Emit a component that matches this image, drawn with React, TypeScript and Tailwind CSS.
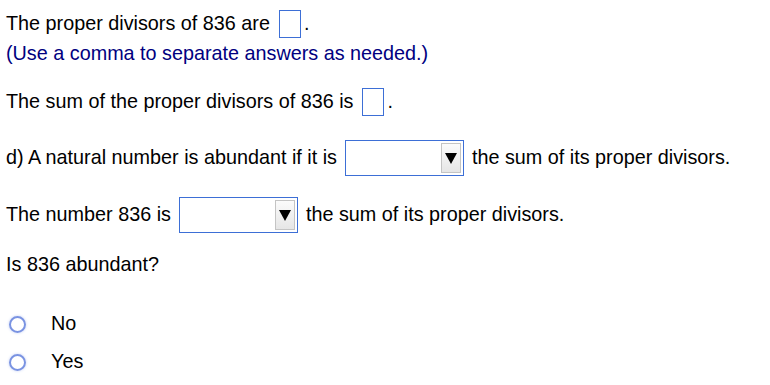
import React from 'react';

const font = { fontFamily: '"Liberation Sans", Arial, sans-serif' };

function AnswerBox() {
  return <span className="inline-block w-[22px] h-[28px] border border-[#3d6fd6] bg-white ml-[9px] mr-[6px]" />;
}

function DropBox() {
  return (
    <span className="inline-flex items-center justify-end w-[119px] h-[36px] border border-[#3d6fd6] bg-white mx-[8px] pr-[2px]">
      <span className="flex items-center justify-center w-[20px] h-[30px] border border-[#c4c4c4] bg-gradient-to-b from-[#fbfbfb] to-[#e6e6e6]">
        <svg width="12" height="11" viewBox="0 0 12 11">
          <path d="M0 0H12L6 11Z" fill="#000" />
        </svg>
      </span>
    </span>
  );
}

function Radio({ label }: { label: string }) {
  return (
    <div className="flex items-center h-[38px]">
      <span className="w-[17px] h-[17px] ml-[3px] rounded-full border-2 border-[#7a93e2] shadow-[0_0_3px_#c7d2f4]" />
      <span className="ml-[25px]">{label}</span>
    </div>
  );
}

export default function App() {
  return (
    <div className="w-[770px] h-[385px] bg-white text-black text-[19.8px] leading-none pl-[6px] overflow-hidden" style={font}>
      <div className="flex items-center h-[28px] mt-[10px]">
        <span>The proper divisors of 836 are</span>
        <AnswerBox />
        <span className="-ml-[3px]">.</span>
      </div>
      <div className="flex items-center h-[24px] mt-[4px] text-[#000080]">
        (Use a comma to separate answers as needed.)
      </div>
      <div className="flex items-center h-[28px] mt-[22px]">
        <span>The sum of the proper divisors of 836 is</span>
        <AnswerBox />
        <span className="-ml-[3px]">.</span>
      </div>
      <div className="flex items-center h-[36px] mt-[24px]">
        <span>d) A natural number is abundant if it is</span>
        <DropBox />
        <span>the sum of its proper divisors.</span>
      </div>
      <div className="flex items-center h-[36px] mt-[21px]">
        <span>The number 836 is</span>
        <DropBox />
        <span>the sum of its proper divisors.</span>
      </div>
      <div className="flex items-center h-[24px] mt-[20px]">Is 836 abundant?</div>
      <div className="mt-[28px]">
        <Radio label="No" />
        <Radio label="Yes" />
      </div>
    </div>
  );
}
